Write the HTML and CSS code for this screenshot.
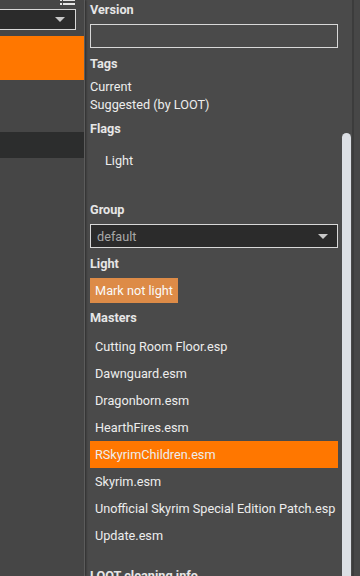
FILE: index.html
```html
<!DOCTYPE html>
<html lang="en">
<head>
    <meta charset="UTF-8">
    <meta name="viewport" content="width=device-width, initial-scale=1.0">
    <title>Plugin Details</title>
    <link rel="stylesheet" href="styles.css">
</head>
<body>
    <div class="app">
        <div class="plugin-list">
            <div class="list-tools">
                <svg class="list-icon" width="16" height="6" viewBox="0 0 16 6">
                    <rect x="0" y="-1" width="2" height="2" fill="#e6e6e6"/>
                    <rect x="3" y="-1" width="12" height="2" fill="#e6e6e6"/>
                    <rect x="0" y="3" width="2" height="2" fill="#e6e6e6"/>
                    <rect x="3" y="3" width="12" height="2" fill="#e6e6e6"/>
                </svg>
            </div>
            <div class="list-select">
                <span class="select-arrow"></span>
            </div>
            <div class="list-row selected"></div>
            <div class="list-row"></div>
            <div class="list-row"></div>
            <div class="list-row dark"></div>
        </div>

        <div class="details">
            <div class="details-body">
                <h2>Version</h2>
                <div class="text-field"></div>

                <h2>Tags</h2>
                <div class="tag-list">
                    <div class="tag">Current</div>
                    <div class="tag">Suggested (by LOOT)</div>
                </div>

                <h2>Flags</h2>
                <div class="flag-list">
                    <div class="flag">Light</div>
                </div>

                <h2>Group</h2>
                <div class="dropdown">
                    <span>default</span>
                    <span class="select-arrow"></span>
                </div>

                <h2>Light</h2>
                <button class="action-btn">Mark not light</button>

                <h2>Masters</h2>
                <div class="masters">
                    <div class="master">Cutting Room Floor.esp</div>
                    <div class="master">Dawnguard.esm</div>
                    <div class="master">Dragonborn.esm</div>
                    <div class="master">HearthFires.esm</div>
                    <div class="master active">RSkyrimChildren.esm</div>
                    <div class="master">Skyrim.esm</div>
                    <div class="master">Unofficial Skyrim Special Edition Patch.esp</div>
                    <div class="master">Update.esm</div>
                </div>

                <h2 class="last-heading">LOOT cleaning info</h2>
            </div>
            <div class="scrollbar">
                <div class="scroll-thumb"></div>
            </div>
            <div class="edge"></div>
        </div>
    </div>
</body>
</html>
```

FILE: styles.css
```css
* {
    margin: 0;
    padding: 0;
    box-sizing: border-box;
    font-family: Roboto, 'Noto Sans', sans-serif;
}

body {
    background: #484848;
    width: 360px;
    height: 576px;
    overflow: hidden;
    color: #ededed;
    font-size: 12.7px;
}

.app {
    display: flex;
    height: 576px;
}

/* Left plugin list */
.plugin-list {
    width: 85px;
    background: #464646;
    border-right: 1px solid #5c5c5c;
    box-shadow: 1px 0 2px rgba(0, 0, 0, 0.4);
    position: relative;
    z-index: 1;
}

.list-tools {
    height: 9px;
    display: flex;
    justify-content: flex-end;
    padding-right: 8px;
}

.list-icon {
    display: block;
}

.list-select {
    height: 21px;
    width: 76px;
    background: #2b2b2b;
    border: 1px solid #d8d8d8;
    border-left: none;
    display: flex;
    align-items: center;
    justify-content: flex-end;
    padding-right: 10px;
}

.select-arrow {
    width: 0;
    height: 0;
    border-left: 5px solid transparent;
    border-right: 5px solid transparent;
    border-top: 5px solid #c8c8c8;
}

.list-row {
    height: 26px;
}

.list-row.selected {
    margin-top: 6px;
    height: 44px;
    background: #ff7700;
}

.list-row.dark {
    background: #2c2d2d;
}

/* Right details panel */
.details {
    flex: 1;
    display: flex;
    background: #4a4a4a;
}

.details-body {
    flex: 1;
    padding: 0 4px 0 5px;
}

h2 {
    font-size: 12.7px;
    font-weight: 700;
    line-height: 20px;
    color: #e6e6e6;
}

.text-field {
    margin: 4px 0 6px;
    height: 24px;
    border: 1px solid #d8d8d8;
}

.tag-list {
    margin: 4px 0 5px;
}

.tag {
    line-height: 18px;
}

.flag-list {
    padding: 9px 0 26px 15px;
}

.flag {
    line-height: 26px;
}

.dropdown {
    margin: 4px 0 6px;
    height: 24px;
    background: #2b2b2b;
    border: 1px solid #d8d8d8;
    display: flex;
    align-items: center;
    justify-content: space-between;
    padding: 0 9px 0 6px;
    color: #a8a8a8;
}

.action-btn {
    margin: 4px 0 5px;
    width: 88px;
    height: 25px;
    border: none;
    background: #dd8b47;
    color: #fafafa;
    font-size: 12.7px;
    display: block;
}

.masters {
    margin-top: 5px;
}

.master {
    height: 27px;
    line-height: 27px;
    padding-left: 5px;
}

.master.active {
    background: #ff7700;
}

.last-heading {
    margin-top: 17px;
}

.scrollbar {
    width: 10px;
    padding-top: 133px;
}

.scroll-thumb {
    width: 9px;
    height: 100%;
    background: #dcdfe4;
    border-radius: 5px 5px 0 0;
}

.edge {
    width: 8px;
    border-left: 2px solid #3c3c3c;
    background: #474747;
}
```
